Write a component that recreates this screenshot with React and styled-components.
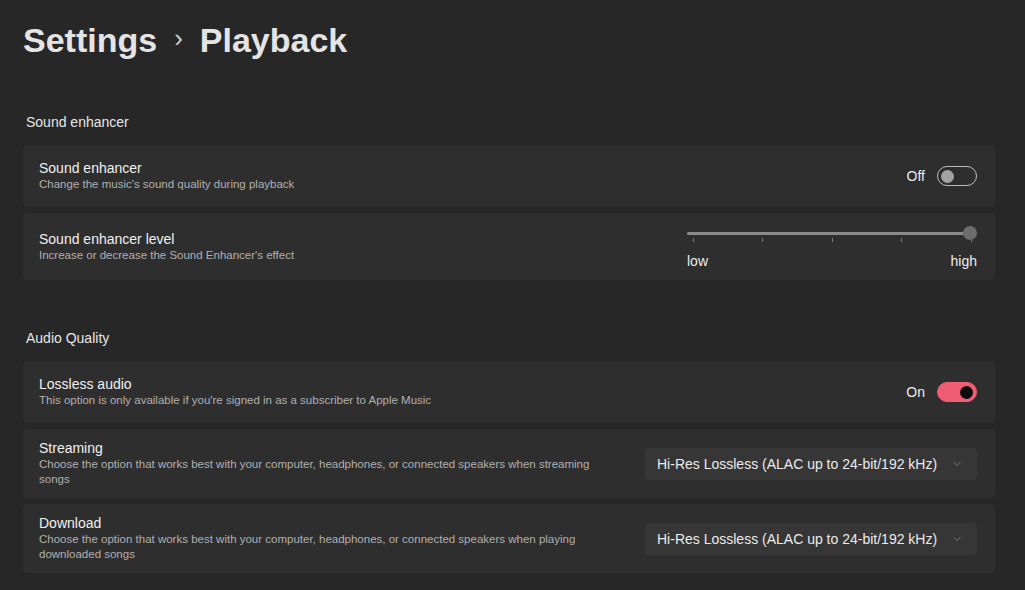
import React from 'react';
import styled, { createGlobalStyle } from 'styled-components';
import { ChevronDown } from 'lucide-react';

const GlobalStyle = createGlobalStyle`
  html, body {
    margin: 0;
    background: #272727;
    font-family: "Liberation Sans", Arial, sans-serif;
    color: #e8e8e8;
  }
`;

const Page = styled.div`
  padding: 18px 30px 0 23px;
`;

const Header = styled.h1`
  margin: 0 0 50px 0;
  display: flex;
  align-items: center;
  gap: 17px;
  font-size: 34px;
  line-height: 44px;
  font-weight: 700;
  color: #e4e4e4;
  letter-spacing: 0;
`;

const Crumb = styled.span`
  font-size: 26px;
  font-weight: 400;
  color: #d0d0d0;
  margin-top: -4px;
`;

const SectionLabel = styled.div`
  font-size: 14px;
  line-height: 20px;
  color: #e6e6e6;
  padding-left: 3px;
  margin-bottom: 13px;
`;

const Section = styled.section`
  margin-bottom: ${(p) => p.$mb || 0}px;
`;

const List = styled.div`
  display: flex;
  flex-direction: column;
  gap: 6px;
`;

const Card = styled.div`
  display: flex;
  align-items: center;
  min-height: ${(p) => p.$h}px;
  box-sizing: border-box;
  padding: 0 18px 0 16px;
  background: #2e2e2e;
  border-radius: 4px;
  gap: 14px;
`;

const TextBlock = styled.div`
  flex: 1;
  min-width: 0;
  max-width: 572px;
`;

const Title = styled.div`
  font-size: 14px;
  line-height: 17px;
  color: #f0f0f0;
`;

const Subtitle = styled.div`
  font-size: 11.5px;
  line-height: 15px;
  color: #b0b0b0;
`;

const ToggleWrap = styled.div`
  margin-left: auto;
  display: flex;
  align-items: center;
  gap: 12px;
  font-size: 14px;
  color: #ececec;
`;

const Switch = styled.div`
  width: 40px;
  height: 20px;
  box-sizing: border-box;
  border-radius: 10px;
  display: flex;
  align-items: center;
  padding: 0 3px;
  justify-content: ${(p) => (p.$on ? 'flex-end' : 'flex-start')};
  background: ${(p) => (p.$on ? '#f05c74' : 'transparent')};
  border: 1px solid ${(p) => (p.$on ? '#f05c74' : '#bdbdbd')};
`;

const Knob = styled.div`
  width: 13px;
  height: 13px;
  border-radius: 50%;
  background: ${(p) => (p.$on ? '#0c0c0c' : '#a3a3a3')};
`;

const Slider = styled.div`
  margin-left: auto;
  width: 290px;
  display: flex;
  flex-direction: column;
  margin-top: 2px;
`;

const TrackWrap = styled.div`
  position: relative;
  height: 14px;
`;

const Track = styled.div`
  position: absolute;
  left: 0;
  right: 7px;
  top: 6px;
  height: 3px;
  border-radius: 2px;
  background: #8b8b8b;
`;

const Tick = styled.div`
  position: absolute;
  top: 12px;
  width: 1px;
  height: 4px;
  background: #7a7a7a;
`;

const Thumb = styled.div`
  position: absolute;
  right: 0;
  top: 0;
  width: 14px;
  height: 14px;
  border-radius: 50%;
  background: #6c6c6c;
`;

const SliderLabels = styled.div`
  display: flex;
  justify-content: space-between;
  margin-top: 13px;
  font-size: 14px;
  line-height: 16px;
  color: #ececec;
`;

const Dropdown = styled.div`
  width: 332px;
  height: 32px;
  box-sizing: border-box;
  flex-shrink: 0;
  margin-left: auto;
  display: flex;
  align-items: center;
  justify-content: space-between;
  padding: 0 14px 0 12px;
  background: #363636;
  border-radius: 4px;
  font-size: 14px;
  color: #ebebeb;
`;

const ticks = [6, 75, 145, 214, 284];

const Toggle = ({ on }) => (
  <ToggleWrap>
    {on ? 'On' : 'Off'}
    <Switch $on={on}>
      <Knob $on={on} />
    </Switch>
  </ToggleWrap>
);

const Select = ({ value }) => (
  <Dropdown>
    {value}
    <ChevronDown size={12} color="#8c8c8c" strokeWidth={1.5} />
  </Dropdown>
);

const Row = ({ h, title, sub, children }) => (
  <Card $h={h}>
    <TextBlock>
      <Title>{title}</Title>
      <Subtitle>{sub}</Subtitle>
    </TextBlock>
    {children}
  </Card>
);

const quality = 'Hi-Res Lossless (ALAC up to 24-bit/192 kHz)';

export default function App() {
  return (
    <Page>
      <GlobalStyle />
      <Header>
        Settings <Crumb>›</Crumb> Playback
      </Header>

      <Section $mb={48}>
        <SectionLabel>Sound enhancer</SectionLabel>
        <List>
          <Row h={62} title="Sound enhancer" sub="Change the music's sound quality during playback">
            <Toggle on={false} />
          </Row>
          <Row h={67} title="Sound enhancer level" sub="Increase or decrease the Sound Enhancer's effect">
            <Slider>
              <TrackWrap>
                <Track />
                {ticks.map((x) => (
                  <Tick key={x} style={{ left: x }} />
                ))}
                <Thumb />
              </TrackWrap>
              <SliderLabels>
                <span>low</span>
                <span>high</span>
              </SliderLabels>
            </Slider>
          </Row>
        </List>
      </Section>

      <Section>
        <SectionLabel>Audio Quality</SectionLabel>
        <List>
          <Row h={62} title="Lossless audio" sub="This option is only available if you're signed in as a subscriber to Apple Music">
            <Toggle on />
          </Row>
          <Row
            h={69}
            title="Streaming"
            sub="Choose the option that works best with your computer, headphones, or connected speakers when streaming songs"
          >
            <Select value={quality} />
          </Row>
          <Row
            h={69}
            title="Download"
            sub="Choose the option that works best with your computer, headphones, or connected speakers when playing downloaded songs"
          >
            <Select value={quality} />
          </Row>
        </List>
      </Section>
    </Page>
  );
}
